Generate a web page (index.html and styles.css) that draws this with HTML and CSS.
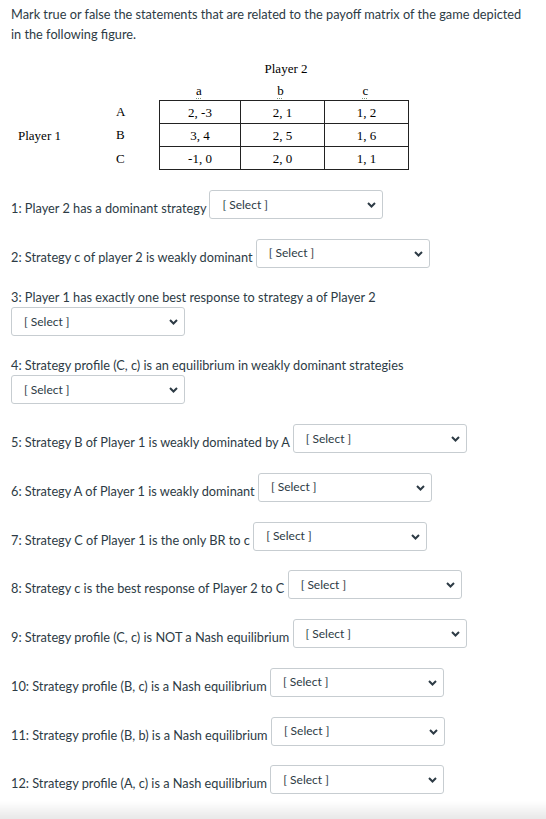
FILE: index.html
```html
<!DOCTYPE html>
<html>
<head>
<meta charset="utf-8">
<link rel="stylesheet" href="styles.css">
</head>
<body>
<div class="page">
  <p class="intro">Mark true or false the statements that are related to the payoff matrix of the game depicted in the following figure.</p>

  <div class="figure">
    <div class="p2">Player 2</div>
    <div class="colhead c1"><span class="sq">a</span></div>
    <div class="colhead c2"><span class="sq">b</span></div>
    <div class="colhead c3"><span class="sq">c</span></div>
    <div class="p1">Player 1</div>
    <div class="rowlab r1">A</div>
    <div class="rowlab r2">B</div>
    <div class="rowlab r3">C</div>
    <table class="matrix">
      <tr><td>2, -3</td><td>2, 1</td><td>1, 2</td></tr>
      <tr><td>3, 4</td><td>2, 5</td><td>1, 6</td></tr>
      <tr><td>-1, 0</td><td>2, 0</td><td>1, 1</td></tr>
    </table>
  </div>

  <p class="q">1: Player 2 has a dominant strategy <span class="sel"><span class="sel-text">[ Select ]</span><svg class="chev" width="9" height="6" viewBox="0 0 9 6"><path d="M1 1 L4.5 4.5 L8 1" fill="none" stroke="#2d3b45" stroke-width="2"/></svg></span></p>
  <p class="q">2: Strategy c of player 2 is weakly dominant <span class="sel"><span class="sel-text">[ Select ]</span><svg class="chev" width="9" height="6" viewBox="0 0 9 6"><path d="M1 1 L4.5 4.5 L8 1" fill="none" stroke="#2d3b45" stroke-width="2"/></svg></span></p>
  <p class="q">3: Player 1 has exactly one best response to strategy a of Player 2 <span class="sel"><span class="sel-text">[ Select ]</span><svg class="chev" width="9" height="6" viewBox="0 0 9 6"><path d="M1 1 L4.5 4.5 L8 1" fill="none" stroke="#2d3b45" stroke-width="2"/></svg></span></p>
  <p class="q">4: Strategy profile (C, c) is an equilibrium in weakly dominant strategies <span class="sel"><span class="sel-text">[ Select ]</span><svg class="chev" width="9" height="6" viewBox="0 0 9 6"><path d="M1 1 L4.5 4.5 L8 1" fill="none" stroke="#2d3b45" stroke-width="2"/></svg></span></p>
  <p class="q">5: Strategy B of Player 1 is weakly dominated by A <span class="sel"><span class="sel-text">[ Select ]</span><svg class="chev" width="9" height="6" viewBox="0 0 9 6"><path d="M1 1 L4.5 4.5 L8 1" fill="none" stroke="#2d3b45" stroke-width="2"/></svg></span></p>
  <p class="q">6: Strategy A of Player 1 is weakly dominant <span class="sel"><span class="sel-text">[ Select ]</span><svg class="chev" width="9" height="6" viewBox="0 0 9 6"><path d="M1 1 L4.5 4.5 L8 1" fill="none" stroke="#2d3b45" stroke-width="2"/></svg></span></p>
  <p class="q">7: Strategy C of Player 1 is the only BR to c <span class="sel"><span class="sel-text">[ Select ]</span><svg class="chev" width="9" height="6" viewBox="0 0 9 6"><path d="M1 1 L4.5 4.5 L8 1" fill="none" stroke="#2d3b45" stroke-width="2"/></svg></span></p>
  <p class="q">8: Strategy c is the best response of Player 2 to C <span class="sel"><span class="sel-text">[ Select ]</span><svg class="chev" width="9" height="6" viewBox="0 0 9 6"><path d="M1 1 L4.5 4.5 L8 1" fill="none" stroke="#2d3b45" stroke-width="2"/></svg></span></p>
  <p class="q">9: Strategy profile (C, c) is NOT a Nash equilibrium <span class="sel"><span class="sel-text">[ Select ]</span><svg class="chev" width="9" height="6" viewBox="0 0 9 6"><path d="M1 1 L4.5 4.5 L8 1" fill="none" stroke="#2d3b45" stroke-width="2"/></svg></span></p>
  <p class="q">10: Strategy profile (B, c) is a Nash equilibrium <span class="sel"><span class="sel-text">[ Select ]</span><svg class="chev" width="9" height="6" viewBox="0 0 9 6"><path d="M1 1 L4.5 4.5 L8 1" fill="none" stroke="#2d3b45" stroke-width="2"/></svg></span></p>
  <p class="q">11: Strategy profile (B, b) is a Nash equilibrium <span class="sel"><span class="sel-text">[ Select ]</span><svg class="chev" width="9" height="6" viewBox="0 0 9 6"><path d="M1 1 L4.5 4.5 L8 1" fill="none" stroke="#2d3b45" stroke-width="2"/></svg></span></p>
  <p class="q">12: Strategy profile (A, c) is a Nash equilibrium <span class="sel"><span class="sel-text">[ Select ]</span><svg class="chev" width="9" height="6" viewBox="0 0 9 6"><path d="M1 1 L4.5 4.5 L8 1" fill="none" stroke="#2d3b45" stroke-width="2"/></svg></span></p>
</div>
<div class="bottom-shadow"></div>
</body>
</html>
```

FILE: styles.css
```css
html, body {
  margin: 0;
  padding: 0;
  background: #ffffff;
}

body {
  font-family: Lato, "Open Sans", "Liberation Sans", sans-serif;
  font-size: 12.75px;
  line-height: 19.5px;
  color: #2d3b45;
  overflow: hidden;
}

.page {
  padding: 5px 16px 0 11px;
}

.intro {
  margin: 0 0 14px;
}

/* figure (payoff matrix) */
.figure {
  display: grid;
  grid-template-columns: 89px 59px 80px 83px 87px;
  grid-template-rows: 20px 22px 23px 23px 24px;
  font-family: "Liberation Serif", "Times New Roman", serif;
  font-size: 13px;
  line-height: 15px;
  color: #000;
}

.p2 {
  grid-column: 3 / 6;
  grid-row: 1;
  text-align: center;
  align-self: center;
  padding-left: 4px;
}

.colhead {
  grid-row: 2;
  text-align: center;
  align-self: end;
  padding-bottom: 2px;
}
.c1 { grid-column: 3; }
.c2 { grid-column: 4; }
.c3 { grid-column: 5; }

.sq {
  text-decoration: underline dotted #7e9a7e;
  text-decoration-thickness: 1px;
  text-underline-offset: 3px;
}

.p1 {
  grid-column: 1;
  grid-row: 3 / 6;
  align-self: center;
  padding-left: 7px;
}

.rowlab {
  grid-column: 2;
  align-self: center;
  padding-left: 16px;
}
.r1 { grid-row: 3; }
.r2 { grid-row: 4; }
.r3 { grid-row: 5; }

.matrix {
  grid-column: 3 / 6;
  grid-row: 3 / 6;
  border-collapse: collapse;
  width: 100%;
  height: 100%;
  font-family: "Liberation Serif", "Times New Roman", serif;
  font-size: 13px;
  line-height: 15px;
  color: #000;
}

.matrix td {
  border: 1px solid #222;
  text-align: center;
  padding: 0;
}
.matrix td:nth-child(1) { width: 80px; }
.matrix td:nth-child(2) { width: 83px; }

/* questions */
.q {
  margin: 0 0 19.75px;
}

.figure + .q {
  margin-top: 20px;
}

.sel {
  display: inline-flex;
  align-items: center;
  justify-content: space-between;
  box-sizing: border-box;
  width: 174px;
  height: 29px;
  padding: 0 6px 0 12px;
  border: 1px solid #c7cdd1;
  border-radius: 3px;
  background: #fff;
  vertical-align: 4px;
  font-size: 12px;
  line-height: 14px;
}

.sel-text {
  color: #2d3b45;
}

.chev {
  display: block;
  margin-top: 1px;
}

.bottom-shadow {
  position: fixed;
  left: 0;
  right: 0;
  bottom: 0;
  height: 18px;
  background: linear-gradient(to bottom, rgba(0,0,0,0), rgba(0,0,0,0.09));
  pointer-events: none;
}
```
